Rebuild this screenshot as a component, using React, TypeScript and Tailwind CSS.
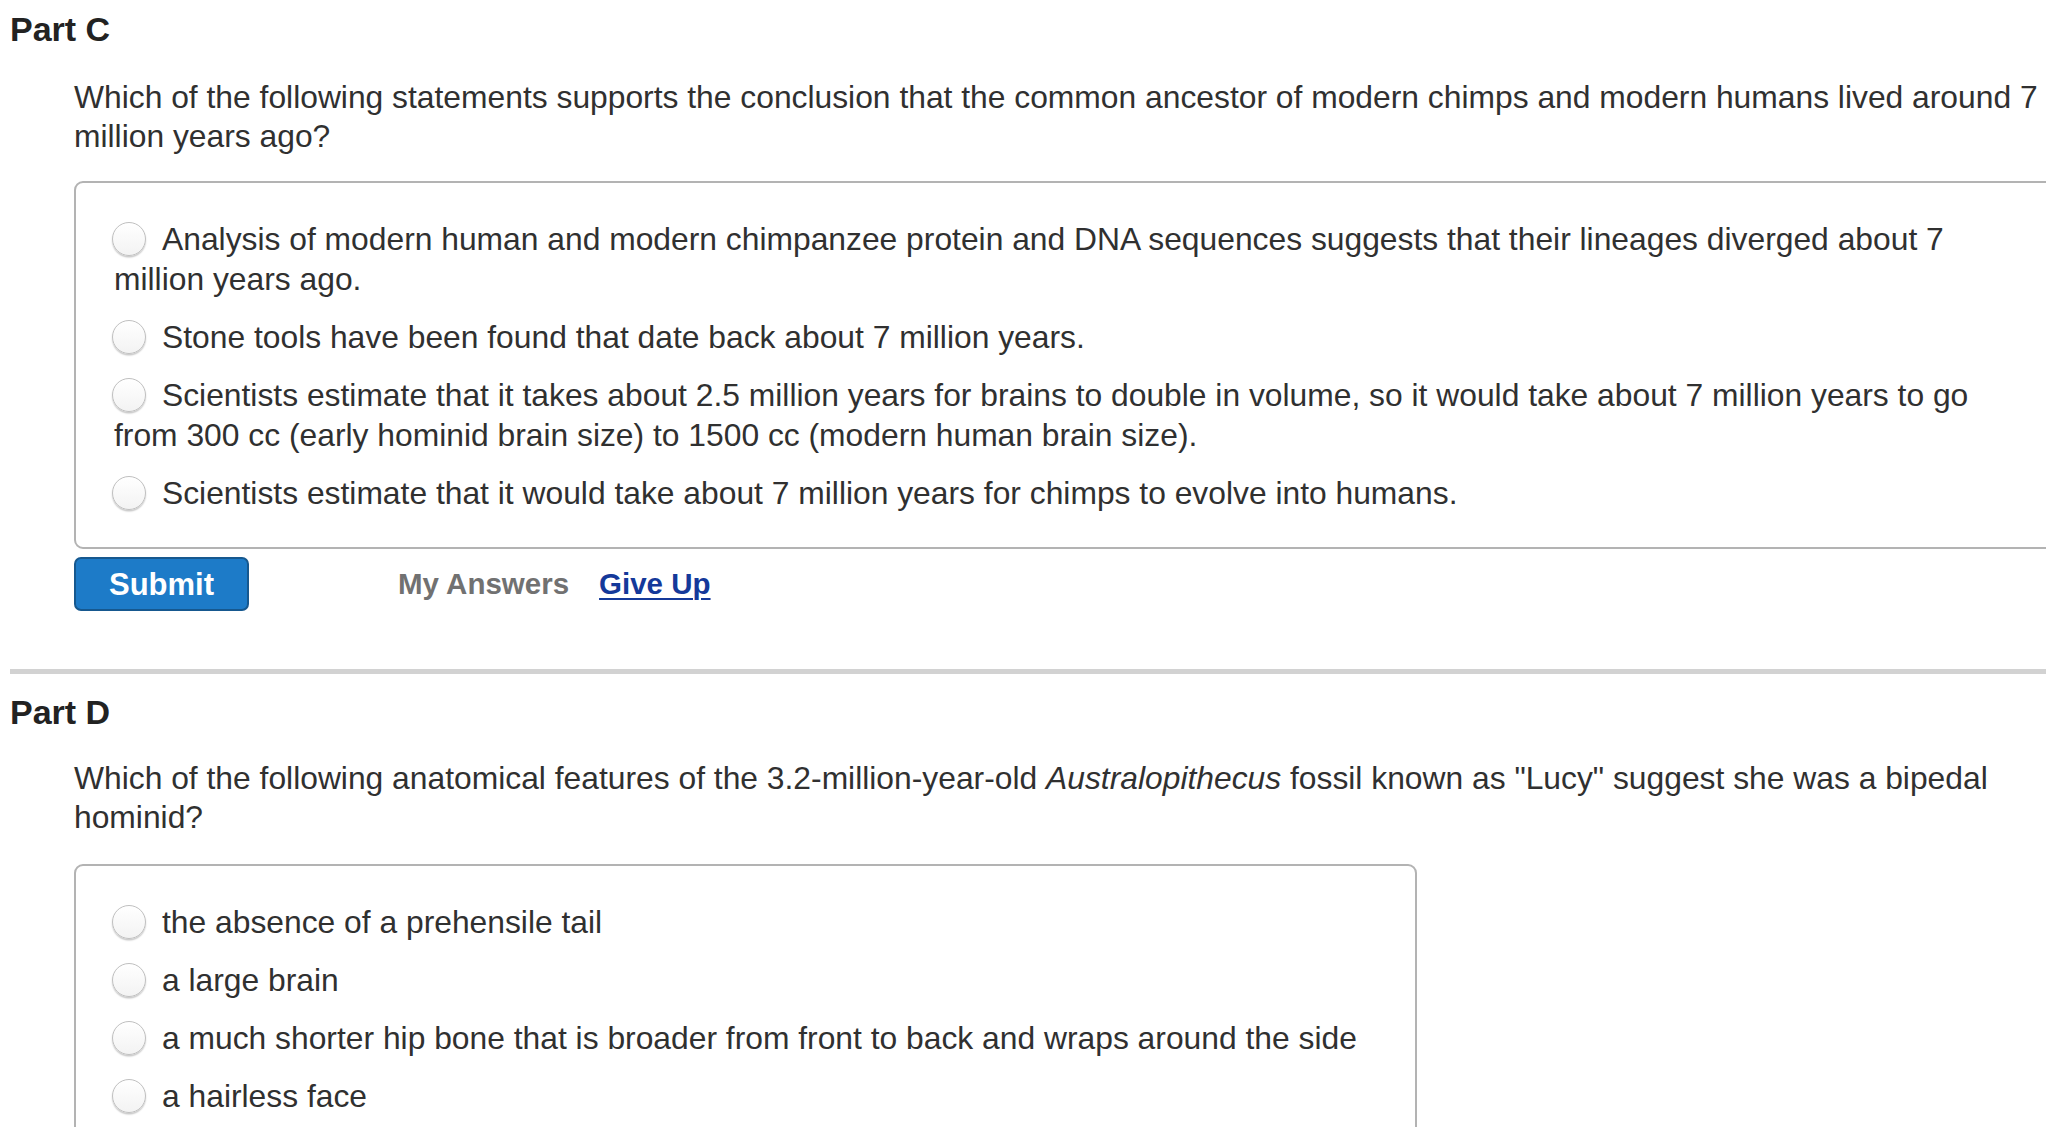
import React from "react";

const font = { fontFamily: '"Liberation Sans", Arial, Helvetica, sans-serif' };

function Radio() {
  return (
    <span className="inline-block align-middle relative top-[-3px] w-[34px] h-[34px] ml-[-2px] mr-[16px] rounded-full border-[1.5px] border-[#c0c0c0] bg-gradient-to-b from-white to-[#f3f3f3] shadow-[0_1.5px_1.5px_rgba(0,0,0,0.22)]" />
  );
}

function Option({ children }: { children: React.ReactNode }) {
  return (
    <div className="leading-[40px] mb-[18px] last:mb-0">
      <Radio />
      {children}
    </div>
  );
}

export default function App() {
  return (
    <div className="w-[2046px] h-[1127px] overflow-hidden bg-white text-[#303030]" style={font}>
      <div className="w-[2060px] pl-[10px] pt-[9px]">
        <h2 className="text-[34px] font-bold leading-[40px] text-[#222222]">Part C</h2>
        <div className="pl-[64px]">
          <p className="mt-[29px] text-[31.8px] leading-[39px]">
            Which of the following statements supports the conclusion that the common ancestor of modern chimps and modern humans lived around 7 million years ago?
          </p>
          <div className="mt-[25px] border-2 border-[#b3b3b3] rounded-[9px] pl-[38px] pr-[36px] pt-[36px] pb-[34px] text-[31.8px]">
            <Option>
              Analysis of modern human and modern chimpanzee protein and DNA sequences suggests that their lineages diverged about 7 million years ago.
            </Option>
            <Option>Stone tools have been found that date back about 7 million years.</Option>
            <Option>
              Scientists estimate that it takes about 2.5 million years for brains to double in volume, so it would take about 7 million years to go from 300 cc (early hominid brain size) to 1500 cc (modern human brain size).
            </Option>
            <Option>Scientists estimate that it would take about 7 million years for chimps to evolve into humans.</Option>
          </div>
          <div className="mt-[8px] flex items-center">
            <button className="w-[175px] h-[54px] rounded-[7px] bg-[#1d7bc8] border-2 border-[#16588f] text-white font-bold text-[31px] leading-none">
              Submit
            </button>
            <span className="ml-[149px] text-[29.5px] font-bold text-[#717171]">My Answers</span>
            <a className="ml-[30px] text-[29.5px] font-bold text-[#14399a] underline underline-offset-[4px] decoration-2">
              Give Up
            </a>
          </div>
        </div>
        <div className="mt-[58px] h-[5px] bg-[#d2d2d2]" />
        <h2 className="mt-[18px] text-[34px] font-bold leading-[40px] text-[#222222]">Part D</h2>
        <div className="pl-[64px]">
          <p className="mt-[27px] text-[31.8px] leading-[39px]">
            Which of the following anatomical features of the 3.2-million-year-old <i>Australopithecus</i> fossil known as "Lucy" suggest she was a bipedal hominid?
          </p>
          <div className="mt-[27px] w-[1343px] border-2 border-[#b3b3b3] rounded-[9px] pl-[38px] pr-[36px] pt-[36px] pb-[34px] text-[31.8px]">
            <Option>the absence of a prehensile tail</Option>
            <Option>a large brain</Option>
            <Option>a much shorter hip bone that is broader from front to back and wraps around the side</Option>
            <Option>a hairless face</Option>
          </div>
        </div>
      </div>
    </div>
  );
}
